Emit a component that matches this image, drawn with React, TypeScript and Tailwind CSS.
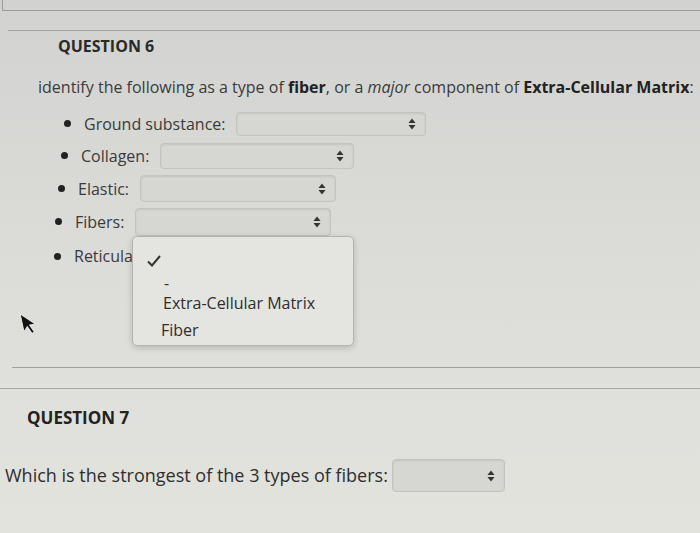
const font = { fontFamily: '"Open Sans", "Liberation Sans", sans-serif' };

function Arrows() {
  return (
    <svg width="8" height="12" viewBox="0 0 8 12" className="shrink-0">
      <path d="M4 0.5 L7.5 5 L0.5 5 Z" fill="#333" />
      <path d="M4 11.5 L7.5 7 L0.5 7 Z" fill="#333" />
    </svg>
  );
}

function Select({ w, h }: { w: string; h: string }) {
  return (
    <div
      className={`${w} ${h} flex items-center justify-end pr-[9px] rounded-[4px] border border-[#c2c3bf] bg-[#d6d7d3] shadow-[inset_0_1px_2px_rgba(0,0,0,0.08)]`}
    >
      <Arrows />
    </div>
  );
}

function Bullet() {
  return <span className="w-[7px] h-[7px] rounded-full bg-[#222] shrink-0" />;
}

export default function App() {
  return (
    <div
      className="relative w-[700px] h-[533px] overflow-hidden bg-gradient-to-b from-[#d2d3d0] via-[#dcddd9] to-[#e3e3de] text-[#333]"
      style={font}
    >
      {/* top frame edge */}
      <div className="ml-[2px] h-[11px] border-l border-b border-[#9c9d9a]" />
      <div className="ml-[8px] mt-[19px] border-t border-[#a3a4a1]" />

      <div className="pl-[58px] pt-[4px] text-[16px] font-bold text-[#2a2a2a] leading-[22px]">QUESTION 6</div>

      <p className="pl-[38px] mt-[19px] text-[16px] leading-[22px] text-[#3a3a3a]">
        identify the following as a type of <b className="text-[#222]">fiber</b>, or a <i>major</i> component of{" "}
        <b className="text-[#222]">Extra-Cellular Matrix</b>:
      </p>

      <div className="mt-[12px] text-[16px] text-[#3a3a3a]">
        <div className="flex items-center h-[27px] pl-[64px]">
          <Bullet />
          <span className="ml-[13px] mr-[11px]">Ground substance:</span>
          <Select w="w-[190px]" h="h-[24px]" />
        </div>
        <div className="flex items-center h-[33px] mt-[2px] pl-[61px]">
          <Bullet />
          <span className="ml-[13px] mr-[11px]">Collagen:</span>
          <Select w="w-[194px]" h="h-[26px]" />
        </div>
        <div className="flex items-center h-[33px] pl-[58px]">
          <Bullet />
          <span className="ml-[13px] mr-[11px]">Elastic:</span>
          <Select w="w-[196px]" h="h-[27px]" />
        </div>
        <div className="flex items-center h-[33px] pl-[55px]">
          <Bullet />
          <span className="ml-[13px] mr-[11px]">Fibers:</span>
          <Select w="w-[196px]" h="h-[28px]" />
        </div>
        <div className="relative flex items-center h-[36px] pl-[54px]">
          <Bullet />
          <span className="ml-[13px]">Reticular:</span>
          <div className="absolute left-[132px] top-[-2px] w-[222px] h-[110px] rounded-[5px] border border-[#b3b4b0] bg-[#e4e4e0] shadow-[0_2px_6px_rgba(0,0,0,0.18)] text-[#2e2e2e]">
            <svg width="16" height="14" viewBox="0 0 16 14" className="absolute left-[13px] top-[17px]">
              <path d="M2 7.5 L6 11.5 L14 2" fill="none" stroke="#333" strokeWidth="2" />
            </svg>
            <div className="absolute left-[31px] top-[40px] leading-[12px]">-</div>
            <div className="absolute left-[30px] top-[56px] leading-[20px]">Extra-Cellular Matrix</div>
            <div className="absolute left-[28px] top-[83px] leading-[20px]">Fiber</div>
          </div>
        </div>
      </div>

      {/* mouse cursor */}
      <svg width="18" height="26" viewBox="0 0 16 24" className="absolute left-[21px] top-[311px] -rotate-[12deg]">
        <path d="M1 1 L1 18 L5 14 L8 21 L10.5 20 L7.5 13 L13 13 Z" fill="#111" stroke="#e5e5e0" strokeWidth="1" />
      </svg>

      <div className="ml-[12px] mt-[93px] border-t border-[#9fa09d]" />
      <div className="mt-[20px] border-t border-[#a6a7a4]" />

      <div className="pl-[27px] mt-[17px] text-[17px] font-bold leading-[24px] text-[#222]">QUESTION 7</div>

      <div className="flex items-center pl-[5px] mt-[29px] text-[18px] text-[#2e2e2e]">
        <span className="mr-[4px]">Which is the strongest of the 3 types of fibers:</span>
        <Select w="w-[113px]" h="h-[33px]" />
      </div>
    </div>
  );
}
